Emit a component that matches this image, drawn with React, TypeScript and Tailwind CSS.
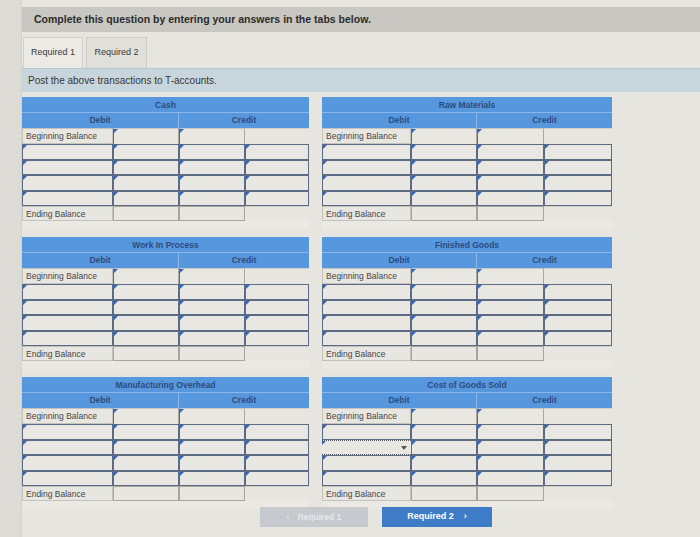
import React from 'react';

type Props = {
  title: string;
  cols: string;
  focusRow?: number;
};

const Marker = () => (
  <span className="absolute left-0 top-0 h-0 w-0 border-t-[4px] border-r-[4px] border-t-[#2d66bd] border-r-transparent" />
);

const InputCell: React.FC<{ dark?: boolean; focus?: boolean }> = ({ dark, focus }) => {
  if (focus) {
    return (
      <div className="relative h-full border-y border-dotted border-[#55595f] bg-[#e9e7e2]">
        <Marker />
        <span className="absolute right-[4px] top-[5px] h-0 w-0 border-x-[3px] border-t-[4px] border-x-transparent border-t-[#555]" />
      </div>
    );
  }
  return (
    <div
      className={`relative h-full bg-[#e9e7e2] ${
        dark ? 'border-[1.5px] border-[#5d6a83]' : 'border-x-[1.5px] border-l-[#5d6a83] border-r-[#a9a7a3] border-t border-t-[#c7c5c0]'
      }`}
    >
      <Marker />
    </div>
  );
};

const LabelCell: React.FC<{ text?: string }> = ({ text }) => (
  <div className="h-full truncate border border-[#c4c2bd] bg-[#e8e6e1] pl-[3px] text-[8.5px] leading-[14px] text-[#474747]">
    {text}
  </div>
);

const PlainCell: React.FC<{ bordered?: boolean }> = ({ bordered }) => (
  <div className={`h-full bg-[#e8e6e1] ${bordered ? 'border border-[#a7a5a0]' : 'border-t border-[#d2d0cb]'}`} />
);

const TAccount: React.FC<Props> = ({ title, cols, focusRow }) => {
  const rowHeights = ['h-[16px]', 'h-[15px]', 'h-[16px]', 'h-[15px]'];
  return (
    <div className="bg-[#ebe9e4] pb-[8px]">
      <div className="h-[16px] border-b border-[#8ab6e9] bg-[#5797de] text-center text-[8.5px] font-bold leading-[16px] text-[#2c4c80]">
        {title}
      </div>
      <div className={`grid h-[15px] ${cols} bg-[#5797de] text-center text-[8.5px] font-bold leading-[15px] text-[#2c4c80]`}>
        <div className="col-span-2 border-r border-[#8ab6e9]">Debit</div>
        <div className="col-span-2">Credit</div>
      </div>
      <div className={`grid h-[16px] ${cols}`}>
        <LabelCell text="Beginning Balance" />
        <InputCell />
        <InputCell />
        <PlainCell />
      </div>
      {rowHeights.map((h, i) => (
        <div key={i} className={`grid ${h} ${cols}`}>
          <InputCell dark focus={focusRow === i} />
          <InputCell dark />
          <InputCell dark />
          <InputCell dark />
        </div>
      ))}
      <div className={`grid h-[15px] ${cols}`}>
        <LabelCell text="Ending Balance" />
        <PlainCell bordered />
        <PlainCell bordered />
        <PlainCell />
      </div>
    </div>
  );
};

const LEFT = 'grid-cols-[91px_66px_66px_64px]';
const RIGHT = 'grid-cols-[89px_66px_67px_68px]';

export default function App() {
  return (
    <div
      className="flex h-[537px] w-[700px] overflow-hidden bg-[#e7e5df]"
      style={{ fontFamily: '"Liberation Sans", Arial, sans-serif' }}
    >
      <div className="w-[22px] shrink-0 border-r border-[#d3d1cb] bg-[#dddbd5]" />

      <div className="flex min-w-0 flex-1 flex-col">
        <div className="mt-[7px] h-[25px] bg-[#c9c7c1] pl-[12px] text-[10.5px] font-bold leading-[25px] text-[#2b2b2b]">
          Complete this question by entering your answers in the tabs below.
        </div>

        <div className="flex h-[36px] items-end gap-[3px] pl-[1px]">
          <div className="flex h-[31px] w-[60px] items-center justify-center border border-b-0 border-[#d2d0ca] bg-[#eceae5] text-[9px] text-[#3a3a3a]">
            Required 1
          </div>
          <div className="flex h-[31px] w-[61px] items-center justify-center border border-b-0 border-[#cfcdc7] bg-[#e1dfd9] text-[9px] text-[#3a3a3a]">
            Required 2
          </div>
        </div>

        <div className="h-[24px] border-t border-[#b9c6ce] bg-[#c9d5dc] pl-[6px] text-[10px] leading-[24px] text-[#353535]">
          Post the above transactions to T-accounts.
        </div>

        <div className="flex flex-col gap-[8px] pt-[5px]">
          <div className="flex gap-[13px]">
            <div className="w-[287px]">
              <TAccount title="Cash" cols={LEFT} />
            </div>
            <div className="w-[290px]">
              <TAccount title="Raw Materials" cols={RIGHT} />
            </div>
          </div>
          <div className="flex gap-[13px]">
            <div className="w-[287px]">
              <TAccount title="Work In Process" cols={LEFT} />
            </div>
            <div className="w-[290px]">
              <TAccount title="Finished Goods" cols={RIGHT} />
            </div>
          </div>
          <div className="flex gap-[13px]">
            <div className="w-[287px]">
              <TAccount title="Manufacturing Overhead" cols={LEFT} />
            </div>
            <div className="w-[290px]">
              <TAccount title="Cost of Goods Sold" cols={RIGHT} focusRow={1} />
            </div>
          </div>
        </div>

        <div className="mt-[-2px] flex gap-[14px] pl-[238px]">
          <div className="flex h-[20px] w-[108px] items-center justify-center gap-[8px] bg-[#c6cacf] text-[8.5px] font-bold text-[#e4e7ea]">
            <span>&lsaquo;</span>
            <span>Required 1</span>
          </div>
          <div className="flex h-[20px] w-[110px] items-center justify-center gap-[10px] bg-[#3e7cc8] text-[9px] font-bold text-white">
            <span>Required 2</span>
            <span>&rsaquo;</span>
          </div>
        </div>
      </div>
    </div>
  );
}
